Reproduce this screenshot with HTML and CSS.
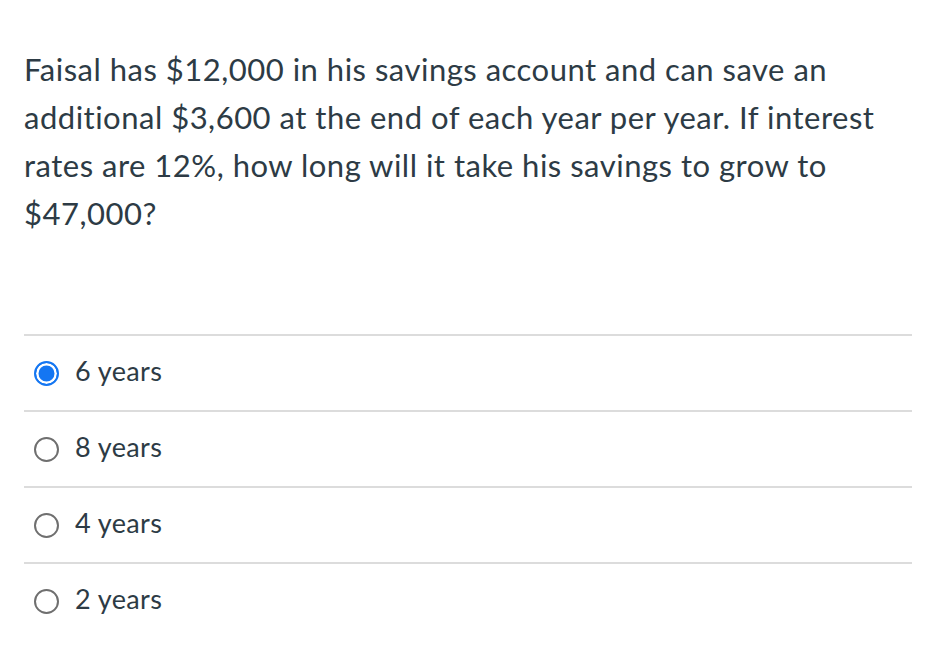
FILE: index.html
```html
<!DOCTYPE html>
<html>
<head>
<meta charset="utf-8">
<link rel="stylesheet" href="styles.css">
</head>
<body>
<div class="quiz">
  <p class="question">Faisal has $12,000 in his savings account and can save an additional $3,600 at the end of each year per year. If interest rates are 12%, how long will it take his savings to grow to $47,000?</p>
  <div class="answers">
    <label class="answer"><span class="radio checked"></span><span class="label">6 years</span></label>
    <label class="answer"><span class="radio"></span><span class="label">8 years</span></label>
    <label class="answer"><span class="radio"></span><span class="label">4 years</span></label>
    <label class="answer"><span class="radio"></span><span class="label">2 years</span></label>
  </div>
</div>
</body>
</html>
```
FILE: styles.css
```css
html, body {
  margin: 0;
  padding: 0;
  background: #fff;
}
body {
  font-family: Lato, "Open Sans", sans-serif;
  color: #2d3b45;
}
.quiz {
  width: 888px;
  padding: 45px 16px 0 24px;
}
.question {
  margin: 0;
  font-size: 31px;
  letter-spacing: 0.5px;
  line-height: 48px;
  width: 870px;
}
.answers {
  margin-top: 97px;
}
.answer {
  display: flex;
  align-items: center;
  gap: 16px;
  height: 74px;
  border-top: 2px solid #dcdcdc;
  padding-left: 10px;
}
.radio {
  box-sizing: border-box;
  width: 25px;
  height: 25px;
  border-radius: 50%;
  border: 2px solid #6f6f6f;
  flex: none;
}
.radio.checked {
  border-color: #1476f2;
  background: #1476f2;
  box-shadow: inset 0 0 0 2.5px #fff;
}
.label {
  font-size: 27px;
  letter-spacing: 0.4px;
  line-height: 1;
  margin-top: -5px;
}
```
